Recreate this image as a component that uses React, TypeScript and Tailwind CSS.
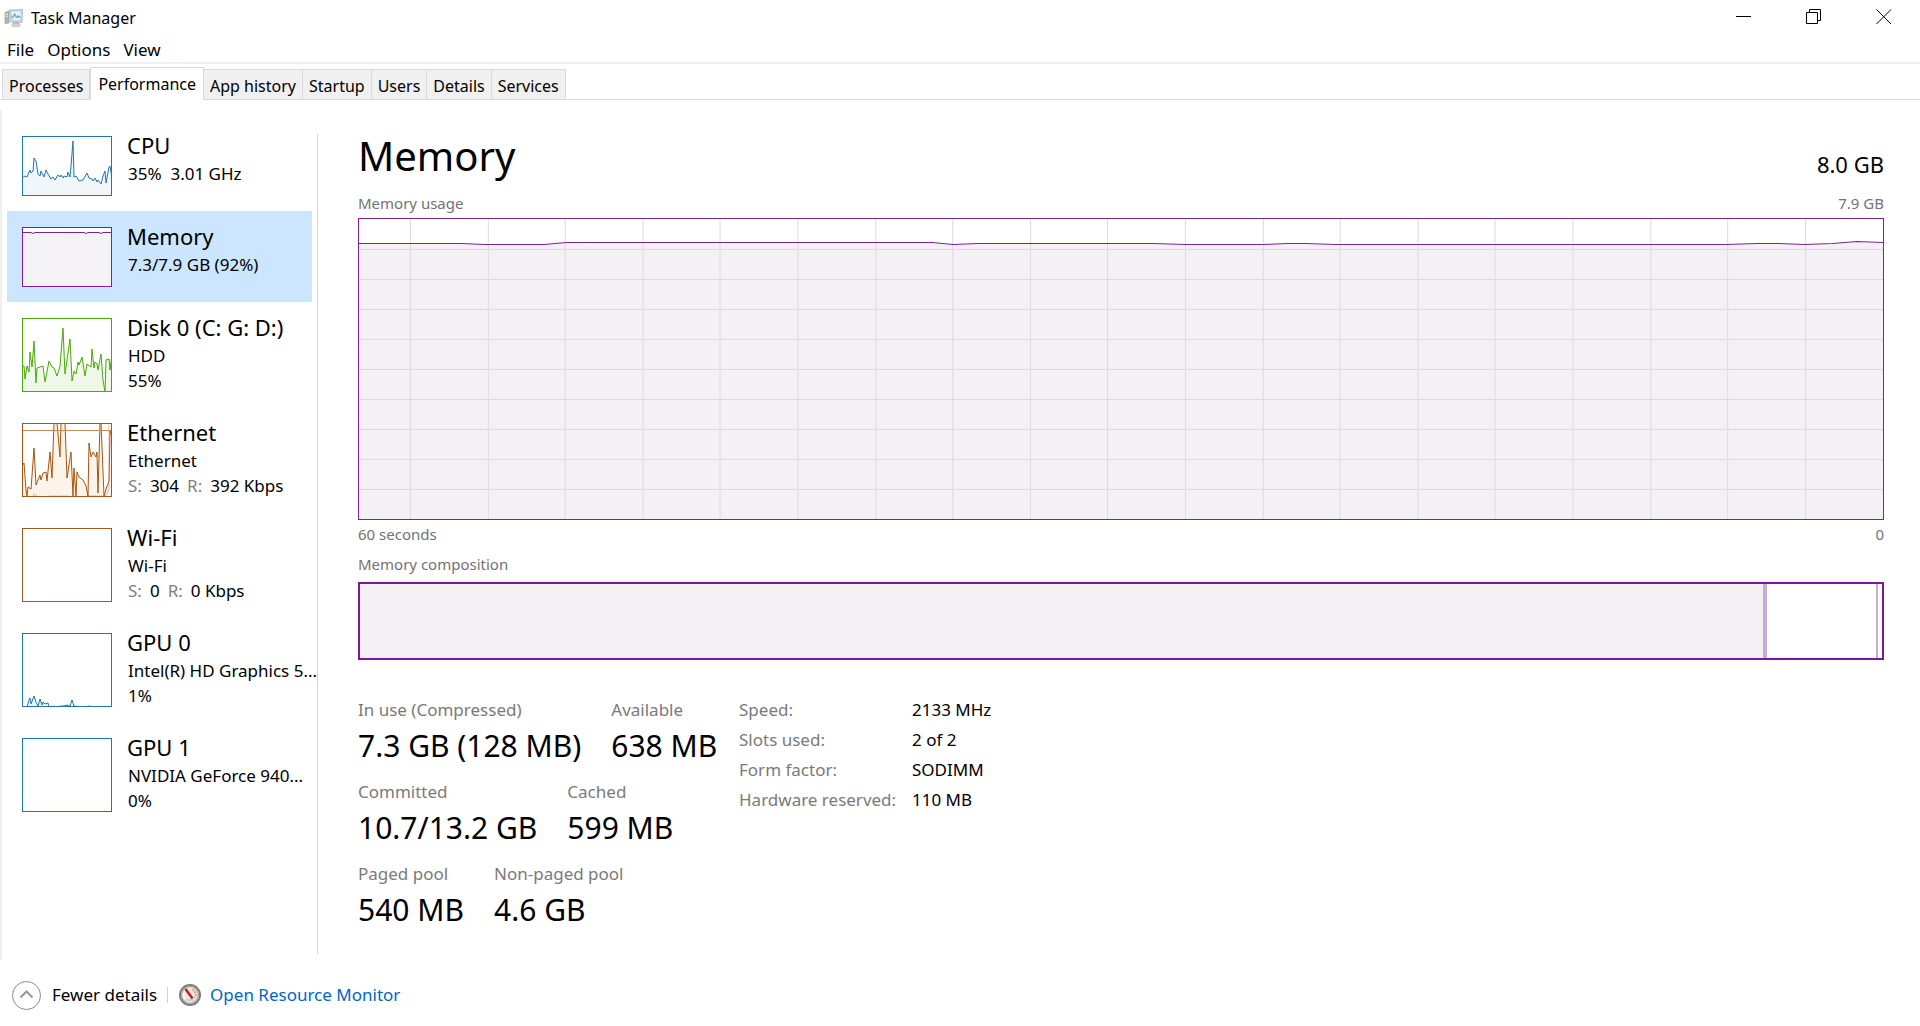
import { ReactNode } from "react";

type Resource = {
  name: string;
  lines: ReactNode[];
  color: string;
  fill: string;
  height: number;
  points?: string;
  extra?: ReactNode;
  selected?: boolean;
};

const rate = (s: string, r: string) => (
  <>
    <span className="text-[#808080]">S:</span>
    <span className="mx-2">{s}</span>
    <span className="text-[#808080]">R:</span>
    <span className="ml-2">{r} Kbps</span>
  </>
);

const resources: Resource[] = [
  {
    name: "CPU",
    lines: [<span className="whitespace-pre">35%  3.01 GHz</span>],
    color: "#1f78ab",
    fill: "#f1f6fa",
    height: 60,
    points:
      "0,42 3,40 5,41 8,34 9,37 11,35 12,22 14,25 16,38 18,40 19,35 22,41 24,34 26,38 29,43 31,41 33,44 36,39 38,41 39,39 41,42 42,40 45,41 46,36 48,41 49,30 51,5 52,41 54,40 57,45 61,44 65,37 67,42 70,43 71,45 73,42 75,46 76,44 79,48 81,40 83,35 84,47 87,31 88,30 90,42",
  },
  {
    name: "Memory",
    lines: ["7.3/7.9 GB (92%)"],
    color: "#7f1f9c",
    fill: "#f4f2f4",
    height: 60,
    points: "0,5.5 9,5.5 11,6.5 13,5.5 62,5.5 64,6.5 66,5.5 77,5.5 79,6.5 81,5.5 90,5.5",
    selected: true,
  },
  {
    name: "Disk 0 (C: G: D:)",
    lines: ["HDD", "55%"],
    color: "#4da60c",
    fill: "#eff7e9",
    height: 74,
    points:
      "0,48 2,48 3,61 5,48 7,54 8,34 10,49 12,23 14,65 15,50 21,48 23,64 27,43 30,49 32,50 35,58 38,48 41,10 43,56 48,21 50,63 52,53 54,56 56,44 57,47 60,39 63,58 65,46 69,49 70,31 72,50 73,44 75,46 76,52 79,36 81,62 83,74 84,42 87,41 88,52 90,36",
  },
  {
    name: "Ethernet",
    lines: ["Ethernet", rate("304", "392")],
    color: "#a5560f",
    fill: "#fcf3eb",
    height: 74,
    points:
      "0,43 2,40 4,67 5,73 6,64 9,66 12,25 14,62 18,52 19,57 21,50 24,49 25,58 28,29 30,55 32,0 35,0 38,34 39,0 43,0 45,55 49,29 51,73 52,45 54,73 55,49 57,54 61,57 64,63 66,73 67,20 69,34 71,29 74,34 75,29 76,70 78,0 79,0 82,73 84,66 87,58 88,8 90,14",
    extra: (
      <>
        <path d="M0 7.500H90" stroke="#c98a58" fill="none" />
        <path d="M11 73L13 71L15 73M27 73H46M67 73H84L87 66V1" stroke="#d88058" strokeDasharray="1 1" fill="none" />
      </>
    ),
  },
  { name: "Wi-Fi", lines: ["Wi-Fi", rate("0", "0")], color: "#9c5a1c", fill: "none", height: 74 },
  {
    name: "GPU 0",
    lines: ["Intel(R) HD Graphics 5...", "1%"],
    color: "#1f78ab",
    fill: "#f1f6fa",
    height: 74,
    points:
      "0,74 5,74 7,67 8,65 9,71 12,63 14,69 16,73 18,66 20,72 21,69 23,71 26,70 27,74 30,74 31,73 35,74 39,73 42,73 45,72 48,73 50,67 52,73 60,74 68,73 70,74 90,74",
  },
  { name: "GPU 1", lines: ["NVIDIA GeForce 940...", "0%"], color: "#1f78ab", fill: "none", height: 74 },
];

function Thumbnail({ r }: { r: Resource }) {
  const h = r.height;
  return (
    <svg width="90" height={h} viewBox={`0 0 90 ${h}`} className="shrink-0 bg-white" aria-hidden="true">
      {r.points && (
        <>
          <polygon points={`0,${h} ${r.points} 90,${h}`} fill={r.fill} />
          <polyline points={r.points} fill="none" stroke={r.color} strokeWidth="1" />
        </>
      )}
      {r.extra}
      <rect x="0.5" y="0.5" width="89" height={h - 1} fill="none" stroke={r.color} />
    </svg>
  );
}

function Sidebar() {
  return (
    <nav aria-label="Resources" className="mt-[10px] w-[310px] shrink-0 pl-[5px]">
      {resources.map((r) => (
        <button
          key={r.name}
          type="button"
          className={`flex w-[305px] items-start gap-[15px] pt-4 pb-[15px] pl-[15px] text-left whitespace-nowrap ${r.selected ? "bg-[#cce6ff]" : ""}`}
        >
          <Thumbnail r={r} />
          <span className="-mt-[7px] -mb-1 flex flex-col">
            <span className="text-[22px] leading-[32px]">{r.name}</span>
            {r.lines.map((line, i) => (
              <span key={i} className="pl-px text-[17px] leading-[25px]">
                {line}
              </span>
            ))}
          </span>
        </button>
      ))}
    </nav>
  );
}

const usage =
  "0,24.5 102,24.5 126,25.5 185,25.5 208,23.5 574,23.5 595,25.5 620,24.5 795,24.5 828,25.5 905,25.5 930,24.5 948,24.5 978,25.5 1369,25.5 1400,24.5 1420,24.5 1448,25.5 1475,24.5 1500,22.5 1526,23.5";
const columns = Array.from({ length: 19 }, (_, i) => Math.round(51 + i * 77.6) + 0.5);
const rows = Array.from({ length: 9 }, (_, i) => (i + 1) * 30 + 0.5);

function UsageChart() {
  return (
    <div className="h-[302px] border border-[#7c2396]">
      <svg
        viewBox="0 0 1526 300"
        preserveAspectRatio="none"
        className="block h-full w-full [&_*]:[vector-effect:non-scaling-stroke]"
        role="img"
        aria-label="Memory usage"
      >
        <polygon points={`0,300 ${usage} 1526,300`} fill="#f4f1f5" />
        {columns.map((x) => (
          <line key={x} x1={x} x2={x} y1="0" y2="300" stroke="#dfd8e0" />
        ))}
        {rows.map((y) => (
          <line key={y} x1="0" x2="1526" y1={y} y2={y} stroke="#e2d3e7" />
        ))}
        <polyline points={usage} fill="none" stroke="#7c2396" strokeWidth="1" />
      </svg>
    </div>
  );
}

const stats = [
  [["In use (Compressed)", "7.3 GB (128 MB)"], ["Available", "638 MB"]],
  [["Committed", "10.7/13.2 GB"], ["Cached", "599 MB"]],
  [["Paged pool", "540 MB"], ["Non-paged pool", "4.6 GB"]],
];
const hardware = [
  ["Speed:", "2133 MHz"],
  ["Slots used:", "2 of 2"],
  ["Form factor:", "SODIMM"],
  ["Hardware reserved:", "110 MB"],
];

function MemoryDetails() {
  return (
    <section className="ml-10 min-w-0 flex-1 pr-9">
      <header className="flex items-end justify-between pt-4">
        <h1 className="text-[40px] leading-[60px]">Memory</h1>
        <span className="text-[22px] leading-[44px]">8.0 GB</span>
      </header>
      <div className="mt-[6px] flex justify-between text-[15px] leading-[22px] text-[#737373]">
        <span>Memory usage</span>
        <span>7.9 GB</span>
      </div>
      <div className="mt-1">
        <UsageChart />
      </div>
      <div className="mt-[3px] flex justify-between text-[15px] leading-[22px] text-[#737373]">
        <span>60 seconds</span>
        <span>0</span>
      </div>
      <div className="mt-2 text-[15px] leading-[22px] text-[#737373]">Memory composition</div>
      <div className="mt-[7px] flex h-[78px] border-2 border-[#7c179c]">
        <div className="flex-1 bg-[#f4f1f5]" />
        <div className="w-1 bg-[#c9acd4]" />
        <div className="w-[7.15%]" />
        <div className="w-[2px] bg-[#c9acd4]" />
        <div className="w-1" />
      </div>
      <div className="mt-[37px] flex whitespace-nowrap">
        <div className="w-[381px]">
          {stats.map((row, i) => (
            <dl key={i} className="flex h-[82px] gap-[30px]">
              {row.map(([label, value]) => (
                <div key={label}>
                  <dt className="text-[17px] leading-[26px] text-[#7a7a7a]">{label}</dt>
                  <dd className="text-[30px] leading-[46px]">{value}</dd>
                </div>
              ))}
            </dl>
          ))}
        </div>
        <table className="-mt-[2px] self-start text-left text-[17px] leading-[30px]">
          <tbody>
            {hardware.map(([label, value]) => (
              <tr key={label}>
                <th scope="row" className="w-[173px] p-0 font-normal text-[#7a7a7a]">
                  {label}
                </th>
                <td className="p-0">{value}</td>
              </tr>
            ))}
          </tbody>
        </table>
      </div>
    </section>
  );
}

function AppIcon() {
  return (
    <svg width="20" height="20" viewBox="0 0 20 20" aria-hidden="true">
      <path d="M1 4.500L5 3V15L1 15.500Z" fill="#b4b4b4" stroke="#8d8d8d" strokeWidth="0.600" />
      <path d="M1.500 6.500L4 6M1.500 8.500L4 8" stroke="#eee" />
      <path d="M9 14H15L16 17H8Z" fill="#b9bcbe" />
      <ellipse cx="12" cy="17.500" rx="5" ry="1.800" fill="#cfd1d2" />
      <path d="M5.500 2L18.500 1.500L18 14.500L6.500 14Z" fill="#d5d8da" stroke="#a3a8ab" strokeWidth="0.700" />
      <path d="M7 3.500L17 3L16.500 12.500L8 12Z" fill="#e9f5fd" stroke="#a9c6dc" strokeWidth="0.500" />
      <path d="M7.500 9L9 9.500L10.500 5.500L12.500 10L14 7.500L15 9.500L16.500 8.500" fill="none" stroke="#3f8fcb" />
    </svg>
  );
}

function GaugeIcon() {
  return (
    <svg width="24" height="24" viewBox="0 0 24 24" aria-hidden="true">
      <circle cx="12" cy="12" r="10" fill="#ece9e4" stroke="#7c7c7c" strokeWidth="2" />
      <circle cx="12" cy="12" r="8.500" fill="none" stroke="#a9a6a3" strokeWidth="1.500" />
      <path d="M6.500 15.500A6.500 6.500 0 0 1 6 10" fill="none" stroke="#fff" strokeWidth="1.500" />
      <path d="M14 6.500A6 6 0 0 1 17 15" fill="none" stroke="#e0a36c" strokeWidth="2" strokeDasharray="2 1" />
      <path d="M8 17H16" stroke="#b9b2aa" />
      <path d="M7.500 6L14.500 15.500" stroke="#c8191e" strokeWidth="2.500" />
    </svg>
  );
}

const tabs = ["Processes", "Performance", "App history", "Startup", "Users", "Details", "Services"];

export default function App() {
  return (
    <div className="flex min-h-screen flex-col bg-white font-['Noto_Sans','Open_Sans',sans-serif] text-black">
      <header className="flex h-9 items-center">
        <span className="ml-1">
          <AppIcon />
        </span>
        <span className="ml-[7px] flex-1 text-[16px] leading-6">Task Manager</span>
        <div className="mr-px flex items-center self-start pt-2">
          <button type="button" aria-label="Minimize" className="px-[27px] py-px">
            <svg width="16" height="16" viewBox="0 0 16 16">
              <path d="M0 7.500H15" stroke="#000" />
            </svg>
          </button>
          <button type="button" aria-label="Restore" className="px-[27px] py-px">
            <svg width="16" height="16" viewBox="0 0 16 16" fill="none" stroke="#000">
              <path d="M0.500 3.500H11.500V14.500H0.500ZM3.500 3.500V0.500H14.500V11.500H11.500" />
            </svg>
          </button>
          <button type="button" aria-label="Close" className="px-[27px] py-px">
            <svg width="16" height="16" viewBox="0 0 16 16">
              <path d="M0.500 0.500L15 15M15 0.500L0.500 15" stroke="#000" />
            </svg>
          </button>
        </div>
      </header>
      <div className="flex h-[28px] items-center gap-[13px] border-b-2 border-[#f0f0f0] pt-px pl-[7px] text-[17px] leading-6">
        <button type="button">File</button>
        <button type="button">Options</button>
        <button type="button">View</button>
      </div>
      <div role="tablist" className="flex h-9 items-end border-b border-[#d9d9d9] pl-[2px] text-[16px]">
        {tabs.map((t) =>
          t === "Performance" ? (
            <button key={t} type="button" role="tab" aria-selected="true" className="-mb-px h-[33px] border border-b-0 border-[#d9d9d9] bg-white px-[7px] pb-px">
              {t}
            </button>
          ) : (
            <button key={t} type="button" role="tab" aria-selected="false" className="h-[30px] border-t border-r border-[#d9d9d9] bg-[#f0f0f0] px-[6px] pt-[2px] first:border-l">
              {t}
            </button>
          ),
        )}
      </div>
      <main className="mt-[10px] flex flex-1 border-l-2 border-[#f0f0f0]">
        <Sidebar />
        <div className="mt-6 mb-[6px] ml-[5px] w-px shrink-0 bg-[#d9d9d9]" />
        <MemoryDetails />
      </main>
      <footer className="flex h-[66px] items-center pt-1 pl-3 text-[17px]">
        <button type="button" className="flex items-center gap-[11px]">
          <svg width="29" height="29" viewBox="0 0 29 29" fill="none">
            <circle cx="14.500" cy="14.500" r="14" stroke="#8a8a8a" />
            <path d="M8.500 16.500L14.500 10.500L20.500 16.500" stroke="#999" strokeWidth="2" />
          </svg>
          Fewer details
        </button>
        <span className="mx-[10px] h-4 w-px bg-[#d0d0d0]" />
        <a href="#resource-monitor" className="flex items-center gap-2 text-[#0066cc]">
          <GaugeIcon />
          Open Resource Monitor
        </a>
      </footer>
    </div>
  );
}
